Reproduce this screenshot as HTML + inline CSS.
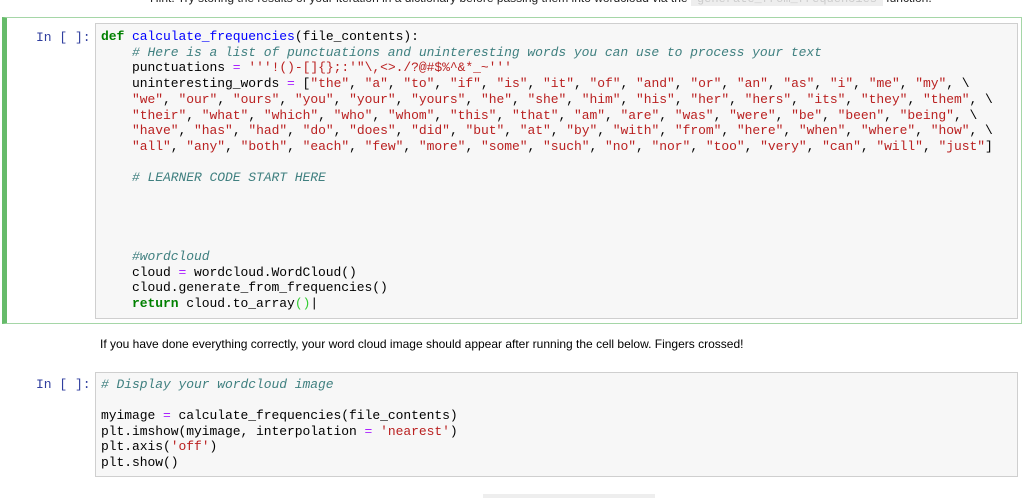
<!DOCTYPE html>
<html><head><meta charset="utf-8"><style>
body{margin:0;width:1024px;height:498px;background:#fff;overflow:hidden;position:relative;font-family:"Liberation Sans",sans-serif}
.top{position:absolute;left:150px;top:-9px;font-size:12px;color:#222;white-space:nowrap}
.top code{background:#eee;font-family:"Liberation Mono","Courier New",monospace;color:#ccc;padding:0 6px;font-size:12px}
.cell1{position:absolute;left:2px;top:17px;border:1px solid #a5d6a7;border-left:5px solid #66bb6a;box-sizing:border-box;width:1020px;height:307px}
.inp{position:absolute;background:#f7f7f7;border:1px solid #cfcfcf;box-sizing:border-box}
.prompt{position:absolute;font-family:"Liberation Mono","Courier New",monospace;font-size:13px;color:#303f9f;white-space:pre}
pre{margin:0;position:absolute;font-family:"Liberation Mono","Courier New",monospace;font-size:13px;line-height:15.7px;color:#000;letter-spacing:-0.05px}
.k{color:#008000;font-weight:bold}.f{color:#0000ff}.c{color:#408080;font-style:italic}.s{color:#ba2121}.o{color:#aa22ff}.p{color:#3c3}
.txt{position:absolute;left:100px;top:337px;font-size:12px;color:#000}
</style></head><body>
<div class="top">Hint: Try storing the results of your iteration in a dictionary before passing them into wordcloud via the <code>generate_from_frequencies</code> function.</div>
<div class="cell1"></div>
<div class="inp" style="left:95px;top:23px;width:923px;height:296px"></div>
<div class="prompt" style="left:36px;top:30px">In [ ]:</div>
<pre style="left:101px;top:29px"><span class="k">def</span> <span class="f">calculate_frequencies</span>(file_contents):
    <span class="c"># Here is a list of punctuations and uninteresting words you can use to process your text</span>
    punctuations <span class="o">=</span> <span class="s">'''!()-[]{};:'"\,&lt;&gt;./?@#$%^&amp;*_~'''</span>
    uninteresting_words <span class="o">=</span> [<span class="s">"the"</span>, <span class="s">"a"</span>, <span class="s">"to"</span>, <span class="s">"if"</span>, <span class="s">"is"</span>, <span class="s">"it"</span>, <span class="s">"of"</span>, <span class="s">"and"</span>, <span class="s">"or"</span>, <span class="s">"an"</span>, <span class="s">"as"</span>, <span class="s">"i"</span>, <span class="s">"me"</span>, <span class="s">"my"</span>, \
    <span class="s">"we"</span>, <span class="s">"our"</span>, <span class="s">"ours"</span>, <span class="s">"you"</span>, <span class="s">"your"</span>, <span class="s">"yours"</span>, <span class="s">"he"</span>, <span class="s">"she"</span>, <span class="s">"him"</span>, <span class="s">"his"</span>, <span class="s">"her"</span>, <span class="s">"hers"</span>, <span class="s">"its"</span>, <span class="s">"they"</span>, <span class="s">"them"</span>, \
    <span class="s">"their"</span>, <span class="s">"what"</span>, <span class="s">"which"</span>, <span class="s">"who"</span>, <span class="s">"whom"</span>, <span class="s">"this"</span>, <span class="s">"that"</span>, <span class="s">"am"</span>, <span class="s">"are"</span>, <span class="s">"was"</span>, <span class="s">"were"</span>, <span class="s">"be"</span>, <span class="s">"been"</span>, <span class="s">"being"</span>, \
    <span class="s">"have"</span>, <span class="s">"has"</span>, <span class="s">"had"</span>, <span class="s">"do"</span>, <span class="s">"does"</span>, <span class="s">"did"</span>, <span class="s">"but"</span>, <span class="s">"at"</span>, <span class="s">"by"</span>, <span class="s">"with"</span>, <span class="s">"from"</span>, <span class="s">"here"</span>, <span class="s">"when"</span>, <span class="s">"where"</span>, <span class="s">"how"</span>, \
    <span class="s">"all"</span>, <span class="s">"any"</span>, <span class="s">"both"</span>, <span class="s">"each"</span>, <span class="s">"few"</span>, <span class="s">"more"</span>, <span class="s">"some"</span>, <span class="s">"such"</span>, <span class="s">"no"</span>, <span class="s">"nor"</span>, <span class="s">"too"</span>, <span class="s">"very"</span>, <span class="s">"can"</span>, <span class="s">"will"</span>, <span class="s">"just"</span>]
    
    <span class="c"># LEARNER CODE START HERE</span>
    
    
    
    
    <span class="c">#wordcloud</span>
    cloud <span class="o">=</span> wordcloud.WordCloud()
    cloud.generate_from_frequencies()
    <span class="k">return</span> cloud.to_array<span class="p">()</span>|</pre>
<div class="txt">If you have done everything correctly, your word cloud image should appear after running the cell below. Fingers crossed!</div>
<div class="inp" style="left:95px;top:372px;width:923px;height:105px"></div>
<div class="prompt" style="left:36px;top:377px">In [ ]:</div>
<pre style="left:101px;top:377px;line-height:15.6px"><span class="c"># Display your wordcloud image</span>

myimage <span class="o">=</span> calculate_frequencies(file_contents)
plt.imshow(myimage, interpolation <span class="o">=</span> <span class="s">'nearest'</span>)
plt.axis(<span class="s">'off'</span>)
plt.show()</pre>
<div style="position:absolute;left:483px;top:494px;width:172px;height:4px;background:#eee"></div>
</body></html>
